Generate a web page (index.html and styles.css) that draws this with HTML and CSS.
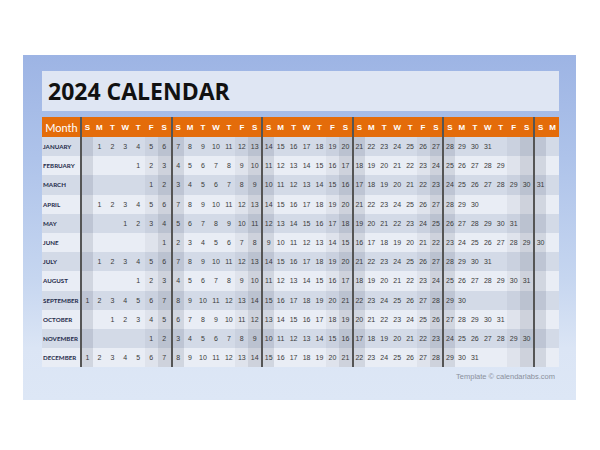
FILE: index.html
```html
<!DOCTYPE html>
<html lang="en">
<head>
<meta charset="utf-8">
<title>2024 Calendar</title>
<link rel="stylesheet" href="styles.css">
</head>
<body>
<div class="panel">
  <div class="title">2024 CALENDAR</div>
  <div class="cal">
    <div class="row head"><div class="m">Month</div><span>S</span><span>M</span><span>T</span><span>W</span><span>T</span><span>F</span><span>S</span><span>S</span><span>M</span><span>T</span><span>W</span><span>T</span><span>F</span><span>S</span><span>S</span><span>M</span><span>T</span><span>W</span><span>T</span><span>F</span><span>S</span><span>S</span><span>M</span><span>T</span><span>W</span><span>T</span><span>F</span><span>S</span><span>S</span><span>M</span><span>T</span><span>W</span><span>T</span><span>F</span><span>S</span><span>S</span><span>M</span></div>
    <div class="rows">
      <div class="row"><div class="m">JANUARY</div><span></span><span>1</span><span>2</span><span>3</span><span>4</span><span>5</span><span>6</span><span>7</span><span>8</span><span>9</span><span>10</span><span>11</span><span>12</span><span>13</span><span>14</span><span>15</span><span>16</span><span>17</span><span>18</span><span>19</span><span>20</span><span>21</span><span>22</span><span>23</span><span>24</span><span>25</span><span>26</span><span>27</span><span>28</span><span>29</span><span>30</span><span>31</span><span></span><span></span><span></span><span></span><span></span></div>
      <div class="row"><div class="m">FEBRUARY</div><span></span><span></span><span></span><span></span><span>1</span><span>2</span><span>3</span><span>4</span><span>5</span><span>6</span><span>7</span><span>8</span><span>9</span><span>10</span><span>11</span><span>12</span><span>13</span><span>14</span><span>15</span><span>16</span><span>17</span><span>18</span><span>19</span><span>20</span><span>21</span><span>22</span><span>23</span><span>24</span><span>25</span><span>26</span><span>27</span><span>28</span><span>29</span><span></span><span></span><span></span><span></span></div>
      <div class="row"><div class="m">MARCH</div><span></span><span></span><span></span><span></span><span></span><span>1</span><span>2</span><span>3</span><span>4</span><span>5</span><span>6</span><span>7</span><span>8</span><span>9</span><span>10</span><span>11</span><span>12</span><span>13</span><span>14</span><span>15</span><span>16</span><span>17</span><span>18</span><span>19</span><span>20</span><span>21</span><span>22</span><span>23</span><span>24</span><span>25</span><span>26</span><span>27</span><span>28</span><span>29</span><span>30</span><span>31</span><span></span></div>
      <div class="row"><div class="m">APRIL</div><span></span><span>1</span><span>2</span><span>3</span><span>4</span><span>5</span><span>6</span><span>7</span><span>8</span><span>9</span><span>10</span><span>11</span><span>12</span><span>13</span><span>14</span><span>15</span><span>16</span><span>17</span><span>18</span><span>19</span><span>20</span><span>21</span><span>22</span><span>23</span><span>24</span><span>25</span><span>26</span><span>27</span><span>28</span><span>29</span><span>30</span><span></span><span></span><span></span><span></span><span></span><span></span></div>
      <div class="row"><div class="m">MAY</div><span></span><span></span><span></span><span>1</span><span>2</span><span>3</span><span>4</span><span>5</span><span>6</span><span>7</span><span>8</span><span>9</span><span>10</span><span>11</span><span>12</span><span>13</span><span>14</span><span>15</span><span>16</span><span>17</span><span>18</span><span>19</span><span>20</span><span>21</span><span>22</span><span>23</span><span>24</span><span>25</span><span>26</span><span>27</span><span>28</span><span>29</span><span>30</span><span>31</span><span></span><span></span><span></span></div>
      <div class="row"><div class="m">JUNE</div><span></span><span></span><span></span><span></span><span></span><span></span><span>1</span><span>2</span><span>3</span><span>4</span><span>5</span><span>6</span><span>7</span><span>8</span><span>9</span><span>10</span><span>11</span><span>12</span><span>13</span><span>14</span><span>15</span><span>16</span><span>17</span><span>18</span><span>19</span><span>20</span><span>21</span><span>22</span><span>23</span><span>24</span><span>25</span><span>26</span><span>27</span><span>28</span><span>29</span><span>30</span><span></span></div>
      <div class="row"><div class="m">JULY</div><span></span><span>1</span><span>2</span><span>3</span><span>4</span><span>5</span><span>6</span><span>7</span><span>8</span><span>9</span><span>10</span><span>11</span><span>12</span><span>13</span><span>14</span><span>15</span><span>16</span><span>17</span><span>18</span><span>19</span><span>20</span><span>21</span><span>22</span><span>23</span><span>24</span><span>25</span><span>26</span><span>27</span><span>28</span><span>29</span><span>30</span><span>31</span><span></span><span></span><span></span><span></span><span></span></div>
      <div class="row"><div class="m">AUGUST</div><span></span><span></span><span></span><span></span><span>1</span><span>2</span><span>3</span><span>4</span><span>5</span><span>6</span><span>7</span><span>8</span><span>9</span><span>10</span><span>11</span><span>12</span><span>13</span><span>14</span><span>15</span><span>16</span><span>17</span><span>18</span><span>19</span><span>20</span><span>21</span><span>22</span><span>23</span><span>24</span><span>25</span><span>26</span><span>27</span><span>28</span><span>29</span><span>30</span><span>31</span><span></span><span></span></div>
      <div class="row"><div class="m">SEPTEMBER</div><span>1</span><span>2</span><span>3</span><span>4</span><span>5</span><span>6</span><span>7</span><span>8</span><span>9</span><span>10</span><span>11</span><span>12</span><span>13</span><span>14</span><span>15</span><span>16</span><span>17</span><span>18</span><span>19</span><span>20</span><span>21</span><span>22</span><span>23</span><span>24</span><span>25</span><span>26</span><span>27</span><span>28</span><span>29</span><span>30</span><span></span><span></span><span></span><span></span><span></span><span></span><span></span></div>
      <div class="row"><div class="m">OCTOBER</div><span></span><span></span><span>1</span><span>2</span><span>3</span><span>4</span><span>5</span><span>6</span><span>7</span><span>8</span><span>9</span><span>10</span><span>11</span><span>12</span><span>13</span><span>14</span><span>15</span><span>16</span><span>17</span><span>18</span><span>19</span><span>20</span><span>21</span><span>22</span><span>23</span><span>24</span><span>25</span><span>26</span><span>27</span><span>28</span><span>29</span><span>30</span><span>31</span><span></span><span></span><span></span><span></span></div>
      <div class="row"><div class="m">NOVEMBER</div><span></span><span></span><span></span><span></span><span></span><span>1</span><span>2</span><span>3</span><span>4</span><span>5</span><span>6</span><span>7</span><span>8</span><span>9</span><span>10</span><span>11</span><span>12</span><span>13</span><span>14</span><span>15</span><span>16</span><span>17</span><span>18</span><span>19</span><span>20</span><span>21</span><span>22</span><span>23</span><span>24</span><span>25</span><span>26</span><span>27</span><span>28</span><span>29</span><span>30</span><span></span><span></span></div>
      <div class="row"><div class="m">DECEMBER</div><span>1</span><span>2</span><span>3</span><span>4</span><span>5</span><span>6</span><span>7</span><span>8</span><span>9</span><span>10</span><span>11</span><span>12</span><span>13</span><span>14</span><span>15</span><span>16</span><span>17</span><span>18</span><span>19</span><span>20</span><span>21</span><span>22</span><span>23</span><span>24</span><span>25</span><span>26</span><span>27</span><span>28</span><span>29</span><span>30</span><span>31</span><span></span><span></span><span></span><span></span><span></span><span></span></div>
    </div>
  </div>
  <div class="foot">Template © calendarlabs.com</div>
</div>
</body>
</html>
```
FILE: styles.css
```css
* { box-sizing: border-box; margin: 0; padding: 0; }
body { background: #fff; font-family: "Liberation Sans", Arial, sans-serif; }
.panel {
  margin: 55px 0 0 23px;
  width: 553px;
  height: 345px;
  padding: 16px 17px 0 19px;
  background: linear-gradient(180deg, #9db4e4 0%, #aec3ea 30%, #c6d6f0 65%, #dbe5f5 85%, #dde7f6 100%);
}
.title {
  height: 40px;
  background: #dfe6f3;
  display: flex;
  align-items: center;
  padding-left: 6px;
  font: 700 23px "Open Sans", sans-serif;
  color: #111;
}
.cal { margin-top: 6px; }
.row {
  display: grid;
  grid-template-columns: 38px repeat(37, 1fr);
  height: 19.2px;
}
.row > span {
  display: flex;
  align-items: center;
  justify-content: center;
  font-size: 7px;
  color: #3a3a3a;
}
.row > span:nth-child(7n+2) { border-left: 2px solid #555; }
.rows .row > span:nth-child(7n+2) { background: rgba(40, 50, 70, 0.12); }
.rows .row > span:nth-child(7n+8) { background: rgba(40, 50, 70, 0.14); }
.rows .row > span:nth-child(7n+7) { background: rgba(40, 50, 70, 0.05); }
.rows .row:nth-child(odd) { background: #d3dae7; }
.rows .row:nth-child(even) { background: #e9edf5; }
.m {
  display: flex;
  align-items: center;
  padding-left: 1px;
  font-family: Lato, sans-serif;
  font-size: 6.2px;
  font-weight: 700;
  color: #1f2b4a;
}
.head { height: 20px; background: #e46c0a; }
.head > span { color: #fff; font-weight: 700; font-size: 8px; }
.head .m {
  justify-content: center;
  font-size: 11px;
  font-weight: 400;
  color: #fff;
}
.foot {
  text-align: right;
  padding: 5px 4px 0 0;
  font-size: 7.5px;
  color: #8a909c;
}
```
